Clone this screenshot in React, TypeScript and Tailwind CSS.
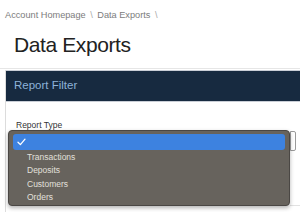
import React from "react";

export default function App() {
  const items = ["Transactions", "Deposits", "Customers", "Orders"];
  return (
    <div className="w-[300px] h-[212px] bg-white overflow-hidden relative" style={{ fontFamily: '"Liberation Sans", Arial, sans-serif' }}>
      <div className="pl-[5px] pt-[9px] text-[9.2px] text-[#7c7c7c] leading-[12px] flex items-center">
        <span>Account Homepage</span>
        <span className="mx-[4.5px] text-[#a8a8a8]">\</span>
        <span>Data Exports</span>
        <span className="mx-[4.5px] text-[#a8a8a8]">\</span>
      </div>
      <div className="pl-[14px] pt-[11px] text-[21px] tracking-[-0.4px] leading-[26px] text-[#222]">Data Exports</div>
      <div className="mt-[10px] h-[1px] bg-[#e6e6e6] w-full" />
      <div className="mt-[1px] ml-[5px] border-l border-[#dcdcdc] h-[200px]">
        <div className="h-[32px] bg-[#172a40] border-t border-b border-[#c9ced6] flex items-center pl-[8px] text-[11.5px] text-[#8db2d8]">
          Report Filter
        </div>
        <div className="pt-[18px] pl-[10px] text-[8.5px] text-[#333] leading-[10px]">Report Type</div>
      </div>
      <div className="absolute left-[290px] top-[131px] w-[6px] h-[20px] border border-[#9a9a9a] bg-white rounded-r-[2px]" />
      <div className="absolute left-[290px] top-[205px] w-[10px] h-[1px] bg-[#e2e2e2]" />
      <div className="absolute left-[8px] top-[130px] w-[282px] h-[76px] bg-[#67635d] border border-[#4a4744] rounded-[4px] shadow-[0_2px_4px_rgba(0,0,0,0.3)] px-[4px] pt-[3px]">
        <div className="h-[16px] bg-[#3d82e0] rounded-[3px] flex items-center pl-[4px]">
          <svg width="9" height="8" viewBox="0 0 9 8">
            <path d="M1 4.2 L3.4 6.6 L8 1.2" stroke="white" strokeWidth="1.3" fill="none" strokeLinecap="round" strokeLinejoin="round" />
          </svg>
        </div>
        {items.map((t) => (
          <div key={t} className="h-[13.5px] pl-[14px] flex items-center text-[8.5px] text-[#e2e0dc] leading-none">
            {t}
          </div>
        ))}
      </div>
    </div>
  );
}
